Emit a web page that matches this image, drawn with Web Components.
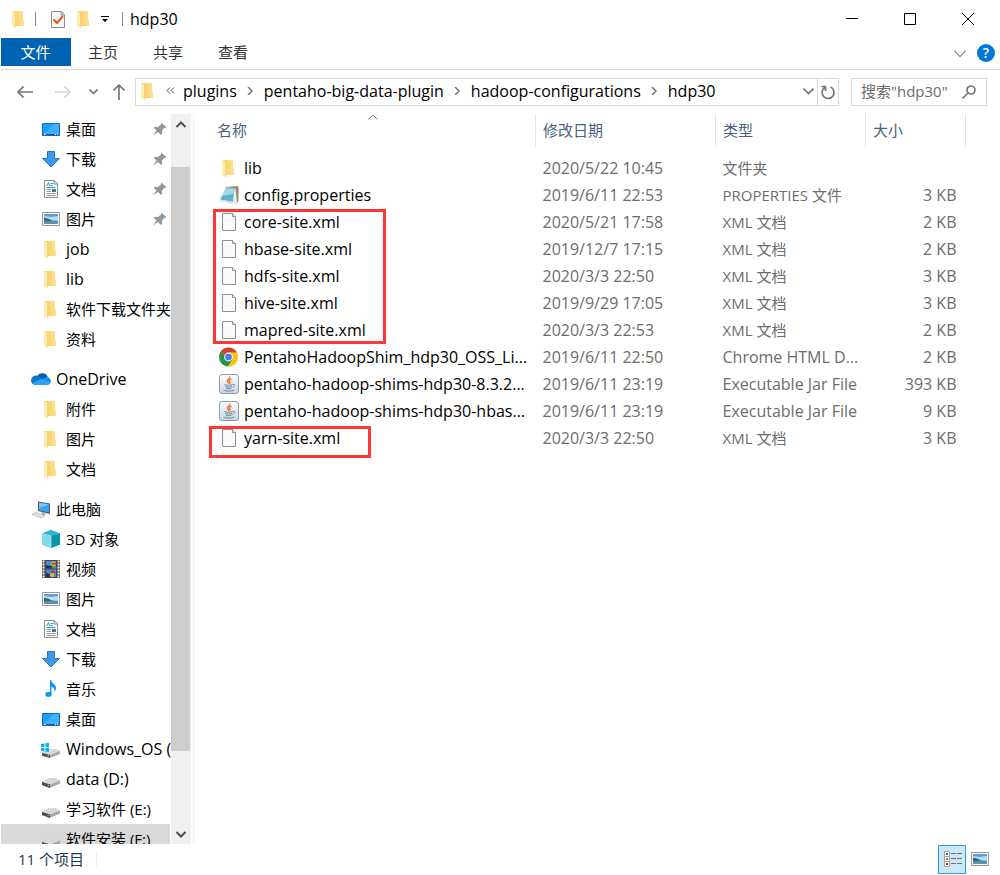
<!DOCTYPE html>
<html lang="zh-CN">
<head>
<meta charset="utf-8">
<title>hdp30</title>
<style>
  body {
    margin: 0;
    background: #fff;
    color: #000;
    font: 15px/20px "Open Sans", "Noto Sans CJK SC", sans-serif;
  }
</style>
</head>
<body>

<explorer-window>
  <title-bar slot="title">hdp30</title-bar>
  <ribbon-tabs slot="ribbon"></ribbon-tabs>
  <address-bar slot="address"></address-bar>

  <nav-pane slot="nav">
    <nav-item icon="desktop" pinned>桌面</nav-item>
    <nav-item icon="download" pinned>下载</nav-item>
    <nav-item icon="document" pinned>文档</nav-item>
    <nav-item icon="picture" pinned>图片</nav-item>
    <nav-item icon="folder" lang="en">job</nav-item>
    <nav-item icon="folder" lang="en">lib</nav-item>
    <nav-item icon="folder">软件下载文件夹</nav-item>
    <nav-item icon="folder">资料</nav-item>

    <nav-item icon="onedrive" root lang="en">OneDrive</nav-item>
    <nav-item icon="folder">附件</nav-item>
    <nav-item icon="folder">图片</nav-item>
    <nav-item icon="folder">文档</nav-item>

    <nav-item icon="computer" root>此电脑</nav-item>
    <nav-item icon="cube">3D 对象</nav-item>
    <nav-item icon="video">视频</nav-item>
    <nav-item icon="picture">图片</nav-item>
    <nav-item icon="document">文档</nav-item>
    <nav-item icon="download">下载</nav-item>
    <nav-item icon="music">音乐</nav-item>
    <nav-item icon="desktop">桌面</nav-item>
    <nav-item icon="osdrive" lang="en">Windows_OS (</nav-item>
    <nav-item icon="drive" lang="en">data (D:)</nav-item>
    <nav-item icon="drive">学习软件 (E:)</nav-item>
    <nav-item icon="drive" selected>软件安装 (F:)</nav-item>
  </nav-pane>

  <file-list slot="files"></file-list>
  <status-bar slot="status">11 个项目</status-bar>
</explorer-window>

<script>
// All icons are drawn on a 20x20 grid.
const ICONS = {
  folder: `
    <defs><linearGradient id="f" x2="1" y2="0"><stop stop-color="#f3cd67"/><stop offset="1" stop-color="#ffe28c"/></linearGradient></defs>
    <path d="M3 2h11v8l1 1v6H6z" fill="url(#f)"/>
    <path d="M3 2l3.6 2v15L3 17.4z" fill="#fdebb0"/>
    <path d="M6.6 4v15" stroke="#e9c56a" stroke-width=".5"/>`,
  checkdoc: `
    <path d="M3.5 2.5h10l3 3v13h-13z" fill="#f7f7f7" stroke="#8c8c8c"/>
    <path d="M13 2.5v3.500h3.500" fill="#ddd" stroke="#8c8c8c"/>
    <path d="M5.500 10.500l3.500 3.500 6-7" fill="none" stroke="#e8591c" stroke-width="2"/>`,
  desktop: `
    <path d="M1.500 4.500h17v12h-17z" fill="#1a9fff" stroke="#0c6db8"/>
    <path d="M2 15.500L13 5h5v10.500z" fill="#41b1ff"/>
    <path d="M2 15.500h16" stroke="#0a5c9e"/>
    <path d="M3 15.500h1.500M14 15.500h1M16 15.500h1" stroke="#fff"/>`,
  download: `<path d="M6.500 2.500h7v7h5L10 18 1.500 9.500h5z" fill="#3d98e8" stroke="#2878c4"/>`,
  document: `
    <path d="M3.500 1.500h10l3 3v14h-13z" fill="#fbfbfb" stroke="#8e8e8e"/>
    <path d="M13 1.500v3.500h3.500" fill="#e4e4e4" stroke="#8e8e8e"/>
    <path d="M5.500 7l2-3.500L8.500 7M9.500 4.500H12M9.500 6.500H12M5.500 8.500h9" fill="none" stroke="#2d9ad8"/>
    <path d="M5.500 10.500H10M5.500 12.500H10M5.500 14.500h9M5.500 16.500h9" stroke="#999"/>
    <path d="M11 10h4v3h-4z" fill="#3f7f9c"/>`,
  picture: `
    <path d="M1.500 3.500h17v13h-17z" fill="#fff" stroke="#979797"/>
    <path d="M3 5h14v10H3z" fill="#b9dcf6"/>
    <path d="M3 5h14v2l-7 1-7-1z" fill="#5a9fe2"/>
    <path d="M3 8.500l4 1 4 2 6 .500V13H3z" fill="#3f6b5c"/>
    <path d="M3 12.500l7-.500 7 .500V15H3z" fill="#5a93bd"/>`,
  onedrive: `
    <path d="M6 7.500A6 6 0 0 1 16.800 8L12 13 4 9z" fill="#0b5cb0"/>
    <path d="M5 16a4.700 4.700 0 1 1 2.600-8.400L15 12l-7 4z" fill="#1172d0"/>
    <path d="M10 11l5-3a4.200 4.200 0 0 1 4.400 6l-5 1z" fill="#1b8de4"/>
    <path d="M1.500 14L11 9.800l8.400 4.400A3.500 3.500 0 0 1 16 16H5a4.500 4.500 0 0 1-3.500-2z" fill="#29a5ee"/>`,
  computer: `
    <path d="M7 2.500l12 2V15L7 12z" fill="#4a5c6c"/>
    <path d="M8 3.800l10 1.700v8L8 11z" fill="#35a4ee"/>
    <path d="M8 3.800l10 1.700L8 9z" fill="#7cc7f8"/>
    <path d="M11 13l3 .800.500 2.200-4-.500z" fill="#99a4ad"/>
    <path d="M1 15.500l4-2 9 3.500-4 2z" fill="#cdd3d8" stroke="#969ea5" stroke-width=".5"/>
    <path d="M3 15.500l8 2.500M5 14.500l7.500 2.800" stroke="#f6f6f6" stroke-width=".6"/>`,
  cube: `
    <path d="M10 1l9 3.500v11L10 19l-9-3.500v-11z" fill="#36c2d7"/>
    <path d="M1 4.500L10 6v13l-9-3.500z" fill="#7adce8"/>
    <path d="M10 6l9-1.500v11L10 19z" fill="#0a95ad"/>
    <path d="M1 4.500L10 1l9 3.500L10 7z" fill="#2fb5ca"/>
    <path d="M1 4.500L10 7v12" fill="none" stroke="#c8f3f7" stroke-width=".6"/>`,
  video: `
    <path d="M1 1h18v18H1z" fill="#464646"/>
    <path d="M2.500 1.500v17M17.500 1.500v17" stroke="#f2f2f2" stroke-width="2" stroke-dasharray="2 1"/>
    <path d="M5 2h10v7.500H5zM5 10.500h10V18H5z" fill="#4b8ad8"/>
    <path d="M5 6l4 1 3-1v3.500H5zM5 14l3 1 2-1v4H5z" fill="#26354e"/>
    <circle cx="12.500" cy="5" r="2.500" fill="#d9b52e"/>
    <path d="M11 4h4v1.500h-4z" fill="#bd3426"/>
    <circle cx="12" cy="8" r="1.500" fill="#4f9d3e"/>
    <circle cx="11" cy="16" r="2.200" fill="#e3b936"/>
    <path d="M10 12h4v2h-4z" fill="#b9362d"/>`,
  music: `
    <path d="M10 1c.4 3 5 4.500 5 8 0 1.700-.5 2.700-1.500 4 .5-3-.8-4.500-3-5.300V15H9V1z" fill="#0f97f4"/>
    <ellipse cx="7.500" cy="15.300" rx="3.200" ry="2.600" fill="#0f97f4"/>`,
  drive: `
    <path d="M1 13l7-4h6l5 2.500v3L8.500 19 1 16z" fill="#a7a7a7"/>
    <path d="M1 13l7-4h6l5 2.500L9 15.500z" fill="#d9d9d9"/>
    <path d="M1 13l8 2.500V19l-8-3z" fill="#4b4b4b"/>
    <path d="M6.500 16.500h1.500" stroke="#58dd58" stroke-width="1.300"/>`,
  osdrive: `
    <path d="M1 14l7-4h6l5 2v3L8.500 19 1 17z" fill="#a7a7a7"/>
    <path d="M1 14l7-4h6l5 2-10 4z" fill="#d9d9d9"/>
    <path d="M1 14l8 2v3l-8-2.500z" fill="#4b4b4b"/>
    <path d="M6.500 17h1.500" stroke="#58dd58" stroke-width="1.300"/>
    <path d="M0 5l3.500-.500V8H0zM4.500 4.300L8 4v4H4.500zM0 9h3.500v3.500L0 12zM4.500 9H8v4l-3.500-.400z" fill="#00b4f0"/>`,
  config: `
    <path d="M7 2l12-1 .500 1v14l-2.500 3-1-1z" fill="#9b8d6c"/>
    <path d="M7 2l9.500 1.500 1.500 14L16 19l-3-2z" fill="#e8f1f3"/>
    <path d="M7 3l8.500 1L14 17 1 14.500z" fill="#62b4cd"/>
    <path d="M7 3l8.500 1-1 5-12 2z" fill="#a3d8e6"/>
    <path d="M1 14.500L14 17l1 1-3 .500L1 16z" fill="#d6e2e5"/>
    <path d="M6.500 2.500l10 1" stroke="#737d80" stroke-dasharray="1 1"/>`,
  file: `
    <path d="M3.500 1.500h10l3 3v14h-13z" fill="#fafafa" stroke="#8f8f8f"/>
    <path d="M13.500 1.500v3h3" fill="#ececec" stroke="#8f8f8f"/>`,
  chrome: `
    <circle cx="9.500" cy="10" r="9.500" fill="#fbc116"/>
    <path d="M9.500 10L1.300 5.300a9.500 9.500 0 0 1 16.400 0z" fill="#d93f30"/>
    <path d="M1.300 5.300A9.500 9.500 0 0 0 9 19.500l4.500-7-4-2.500z" fill="#27964a"/>
    <path d="M9.500 5.500h8.300a9.500 9.500 0 0 1-8.800 14l4.500-7z" fill="#fbc116"/>
    <circle cx="9.500" cy="10" r="4.400" fill="#fff"/>
    <circle cx="9.500" cy="10" r="3.400" fill="#4a80ec"/>`,
  jar: `
    <defs><linearGradient id="j" x2="0" y2="1"><stop stop-color="#fdfdfe"/><stop offset="1" stop-color="#ccd6e0"/></linearGradient></defs>
    <rect x=".5" y=".5" width="19" height="19" rx="2.500" fill="url(#j)" stroke="#8d9dad"/>
    <path d="M10.500 2.500c1.500 2-3.500 3-2 5l1.500 2M12.500 5c-3 1.300-2.500 2-1.500 3.500l-.5 1.200" fill="none" stroke="#e8762c" stroke-width="1.400"/>
    <path d="M5.500 10.500c2 1 6 1 8 0M6 12.500c2 .800 5 .800 7 0M7 14.300c1.500.600 4 .600 5.500 0M4.500 16c2.500 1.500 8 1.500 11 0M14 10.500c2.500-.500 2 2-.5 2.800" fill="none" stroke="#6685a5" stroke-width="1"/>`,
  pin: `<path d="M12 3.500l5.500 4.500-1.500 1-.5-.300-2.500 2.800.200 3L12 16l-3-3-5 3.500 3.500-5L4.800 9l1-1.200 3 .200L12 5.500z" fill="#8d9aa4"/>`,
  details: `
    <path d="M2.500 2.500h5v5h-5zM2.500 7.500h5v5h-5zM2.500 12.500h5v5h-5z" fill="#fff" stroke="#a3a3a3"/>
    <path d="M4 5h2" stroke="#2c6fb0" stroke-width="2"/>
    <path d="M4 10h2" stroke="#cf6a25" stroke-width="2"/>
    <path d="M4 15h2" stroke="#c81a1a" stroke-width="2"/>
    <path d="M9 4.500h5M15 4.500h5M9 9.500h5M15 9.500h5M9 14.500h5M15 14.500h5" stroke="#6f6f6f"/>`,
};

const icon = name =>
  `<svg class="icon" width="20" height="20" viewBox="0 0 20 20" aria-hidden="true">${ICONS[name]}</svg>`;

const BASE = `
  *, *::before { box-sizing: border-box; }
  svg { display: block; flex: none; }
  button {
    display: flex; align-items: center; justify-content: center;
    border: 0; padding: 0; background: none; color: inherit; font: inherit;
  }
  a { color: inherit; text-decoration: none; }
`;

/** Frame: lays out the bars, the navigation pane and the file list. */
class ExplorerWindow extends HTMLElement {
  connectedCallback() {
    this.attachShadow({ mode: 'open' }).innerHTML = `
      <style>
        ${BASE}
        :host { display: flex; flex-direction: column; height: 100vh; padding-left: 1px; box-sizing: border-box; overflow: hidden; }
        main { flex: 1; display: flex; min-height: 0; }
        ::slotted([slot="files"]) { flex: 1; min-width: 0; }
      </style>
      <slot name="title"></slot>
      <slot name="ribbon"></slot>
      <slot name="address"></slot>
      <main>
        <slot name="nav"></slot>
        <slot name="files"></slot>
      </main>
      <slot name="status"></slot>
    `;
  }
}

class TitleBar extends HTMLElement {
  connectedCallback() {
    this.attachShadow({ mode: 'open' }).innerHTML = `
      <style>
        ${BASE}
        :host { display: flex; align-items: center; height: 38px; padding-left: 8px; flex: none; font-size: 16px; }
        .sep { width: 1px; height: 14px; background: #8a8a8a; margin: 0 6px; }
        .quick { margin-left: 6px; }
        .more { width: 22px; }
        .more + .sep { margin: 0 7px 0 6px; }
        .controls { display: flex; margin-left: auto; padding-right: 3px; }
        .controls button { width: 58px; height: 38px; }
        .controls svg { fill: none; stroke: #000; }
      </style>
      ${icon('folder')}
      <span class="sep"></span>
      <button class="quick" aria-label="属性">${icon('checkdoc')}</button>
      <button class="quick" aria-label="新建文件夹">${icon('folder')}</button>
      <button class="more" aria-label="自定义快速访问工具栏">
        <svg width="8" height="8" viewBox="0 0 8 8"><path d="M0 1h8v1H0zM1 4h6L4 7z"/></svg>
      </button>
      <span class="sep"></span>
      <slot></slot>
      <div class="controls">
        <button aria-label="最小化"><svg width="12" height="12"><path d="M0 5.500h12"/></svg></button>
        <button aria-label="最大化"><svg width="12" height="12"><path d="M.5.500h11v11H.5z"/></svg></button>
        <button aria-label="关闭"><svg width="12" height="12"><path d="M0 0l12 12M12 0L0 12"/></svg></button>
      </div>
    `;
  }
}

class RibbonTabs extends HTMLElement {
  connectedCallback() {
    this.attachShadow({ mode: 'open' }).innerHTML = `
      <style>
        ${BASE}
        :host { display: flex; height: 32px; flex: none; color: #333; border-bottom: 1px solid #dadbdc; box-sizing: border-box; }
        .tab { width: 65px; height: 28px; padding-right: 1px; }
        .file { width: 70px; background: #0063b1; color: #fff; }
        .expand { margin-left: auto; width: 26px; height: 30px; }
        .help { width: 26px; height: 30px; margin-right: 1px; }
        .help span { width: 18px; height: 18px; border-radius: 50%; background: #0078d7; color: #fff; font-size: 14px; line-height: 18px; font-weight: 600; }
      </style>
      <button class="tab file">文件</button>
      <button class="tab">主页</button>
      <button class="tab">共享</button>
      <button class="tab">查看</button>
      <button class="expand" aria-label="展开功能区">
        <svg width="12" height="7"><path d="M0 .500l6 6 6-6" fill="none" stroke="#8a8a8a" stroke-width="1.200"/></svg>
      </button>
      <button class="help" aria-label="帮助"><span>?</span></button>
    `;
  }
}

class AddressBar extends HTMLElement {
  connectedCallback() {
    const crumbs = ['plugins', 'pentaho-big-data-plugin', 'hadoop-configurations', 'hdp30'];
    const arrow = `<svg width="27" height="8"><path d="M11 0l4 4-4 4" fill="none" stroke="#777" stroke-width="1.500"/></svg>`;

    this.attachShadow({ mode: 'open' }).innerHTML = `
      <style>
        ${BASE}
        :host { display: flex; align-items: center; height: 43px; flex: none; padding-right: 13px; }
        svg { fill: none; stroke: #777; stroke-width: 1.7; }
        .icon { fill: #000; stroke: none; stroke-width: 1; }
        .move { display: flex; width: 134px; flex: none; }
        .move button { height: 28px; }
        .back { width: 48px; }
        .forward { width: 28px; }
        .forward svg { stroke: #d5d5d5; }
        .recent { width: 33px; }
        .up { width: 17px; }
        .box { display: flex; align-items: center; height: 28px; border: 1px solid #d9d9d9; }
        .path { flex: 1; padding-left: 2px; min-width: 0; font-size: 16px; }
        .path > .icon, .crumbs, .root { margin-bottom: 2px; }
        .crumbs { display: flex; align-items: center; white-space: nowrap; }
        .root { width: 25px; justify-content: center; }
        .drop { margin-left: auto; width: 18px; }
        .refresh { width: 21px; height: 26px; border-left: 1px solid #d9d9d9; }
        .search { width: 136px; margin-left: 12px; padding-left: 9px; }
        input { flex: 1; min-width: 0; width: 0; border: 0; padding: 0 0 2px; outline: 0; background: none; font: inherit; color: #000; }
        input::placeholder { color: #6d6d6d; opacity: 1; }
        .search button { width: 34px; }
      </style>
      <nav class="move">
        <button class="back" aria-label="后退"><svg width="16" height="12"><path d="M16 6H1M6.500.500L1 6l5.500 5.500"/></svg></button>
        <button class="forward" aria-label="前进"><svg width="16" height="12"><path d="M0 6h15M9.500.500L15 6l-5.500 5.500"/></svg></button>
        <button class="recent" aria-label="最近位置"><svg width="9" height="6"><path d="M.500.500l4 4 4-4"/></svg></button>
        <button class="up" aria-label="上移"><svg width="12" height="16"><path d="M6 16V1M.500 6.500L6 1l5.500 5.500"/></svg></button>
      </nav>
      <div class="box path">
        ${icon('folder')}
        <button class="root" aria-label="上级位置"><svg width="9" height="7"><path d="M4 .500l-3 3 3 3M8 .500l-3 3 3 3" stroke="#555" stroke-width="1"/></svg></button>
        <div class="crumbs">${crumbs.map(c => `<a href="#${c}">${c}</a>`).join(arrow)}</div>
        <button class="drop" aria-label="历史记录"><svg width="11" height="7"><path d="M.500.500l5 5 5-5"/></svg></button>
        <button class="refresh" aria-label="刷新">
          <svg width="16" height="16"><path d="M10.500 3a6 6 0 1 1-5.800.500M1.500 2.500h4v4.500"/></svg>
        </button>
      </div>
      <div class="box search">
        <input type="text" aria-label="搜索" placeholder='搜索"hdp30"'>
        <button aria-label="开始搜索"><svg width="14" height="14"><circle cx="9" cy="5" r="4"/><path d="M6 8l-5.500 5.500"/></svg></button>
      </div>
    `;
  }
}

/** One entry of the tree. Attributes: icon, root, pinned, selected. */
class NavItem extends HTMLElement {
  connectedCallback() {
    this.attachShadow({ mode: 'open' }).innerHTML = `
      <style>
        ${BASE}
        :host { display: block; flex: none; }
        :host([lang="en"]) { font-size: 16px; }
        :host([root]) { margin-top: 10px; }
        :host([selected]) { background: #d9d9d9; }
        a { display: flex; align-items: center; gap: 5px; height: 30px; padding-left: 40px; white-space: nowrap; }
        :host([root]) a { padding-left: 30px; }
        .pin { margin-left: auto; width: 21px; }
      </style>
      <a href="#">${icon(this.getAttribute('icon'))}<slot></slot>${
        this.hasAttribute('pinned') ? `<span class="pin">${icon('pin')}</span>` : ''}</a>
    `;
  }
}

class NavPane extends HTMLElement {
  connectedCallback() {
    this.attachShadow({ mode: 'open' }).innerHTML = `
      <style>
        ${BASE}
        :host { display: flex; flex: none; width: 193px; padding: 1px 2px 0 0; border-right: 1px solid #f0f0f0; box-sizing: border-box; }
        .tree { width: 170px; padding-right: 1px; display: flex; flex-direction: column; overflow: hidden; }
        .bar { flex: 1; display: flex; flex-direction: column; background: #f0f0f0; }
        .bar button { height: 20px; padding-right: 1px; flex: none; }
        .bar svg { fill: none; stroke: #505050; stroke-width: 2; }
        .track { flex: 1; display: grid; grid-template-rows: 33fr 584fr 73fr; }
        .thumb { grid-row: 2; margin-right: 1px; background: #cdcdcd; }
      </style>
      <nav class="tree"><slot></slot></nav>
      <div class="bar">
        <button aria-label="向上滚动"><svg width="10" height="7"><path d="M.500 6L5 1.500 9.500 6"/></svg></button>
        <div class="track"><div class="thumb"></div></div>
        <button aria-label="向下滚动"><svg width="10" height="7"><path d="M.500 1L5 5.500 9.500 1"/></svg></button>
      </div>
    `;
  }
}

const FILES = [
  ['folder', 'lib', '2020/5/22 10:45', '文件夹', ''],
  ['config', 'config.properties', '2019/6/11 22:53', 'PROPERTIES 文件', '3 KB'],
  ['file', 'core-site.xml', '2020/5/21 17:58', 'XML 文档', '2 KB'],
  ['file', 'hbase-site.xml', '2019/12/7 17:15', 'XML 文档', '2 KB'],
  ['file', 'hdfs-site.xml', '2020/3/3 22:50', 'XML 文档', '3 KB'],
  ['file', 'hive-site.xml', '2019/9/29 17:05', 'XML 文档', '3 KB'],
  ['file', 'mapred-site.xml', '2020/3/3 22:53', 'XML 文档', '2 KB'],
  ['chrome', 'PentahoHadoopShim_hdp30_OSS_Li...', '2019/6/11 22:50', 'Chrome HTML D...', '2 KB'],
  ['jar', 'pentaho-hadoop-shims-hdp30-8.3.2...', '2019/6/11 23:19', 'Executable Jar File', '393 KB'],
  ['jar', 'pentaho-hadoop-shims-hdp30-hbas...', '2019/6/11 23:19', 'Executable Jar File', '9 KB'],
  ['file', 'yarn-site.xml', '2020/3/3 22:50', 'XML 文档', '3 KB'],
];

/** Details view, with red frames laid over some of the rows. */
class FileList extends HTMLElement {
  connectedCallback() {
    const type = t => `<td class="${/[\u4e00-\u9fff]/.test(t) ? 'cjk' : ''}">${t}</td>`;
    const rows = FILES.map(([ic, name, date, kind, size]) => `
      <tr>
        <td class="name"><a href="#">${icon(ic)}${name}</a></td>
        <td>${date}</td>${type(kind)}<td class="size">${size}</td>
      </tr>`).join('');

    this.attachShadow({ mode: 'open' }).innerHTML = `
      <style>
        ${BASE}
        :host { display: block; position: relative; padding: 1px 34px 0 14px; overflow: hidden; }
        table { width: 100%; table-layout: fixed; border-collapse: collapse; font-size: 16px; color: #6d6d6d; }
        .c-date { width: 180px; }
        .c-type { width: 150px; }
        .c-size { width: 100px; }
        th { position: relative; height: 33px; padding: 0; font-weight: 400; font-size: 15px; color: #4c607a; border-right: 1px solid #e5e5e5; }
        th button { padding: 0 0 2px 7px; height: 33px; }
        th:first-child button { padding-left: 9px; }
        .sort { position: absolute; top: 0; left: 49%; }
        .space td { height: 7px; padding: 0; }
        td { height: 27px; padding: 0 0 0 7px; white-space: nowrap; overflow: hidden; }
        .cjk { font-size: 15px; }
        .name { padding-left: 11px; color: #000; }
        .name a { display: flex; align-items: center; gap: 5px; }
        .size { text-align: right; padding-right: 9px; }
        .frame { position: absolute; border: 3px solid #ff3636; pointer-events: none; }
        .configs { left: 19px; top: 96px; width: 173px; height: 135px; }
        .yarn { left: 15px; top: 313px; width: 162px; height: 32px; }
      </style>
      <table>
        <colgroup><col><col class="c-date"><col class="c-type"><col class="c-size"></colgroup>
        <thead>
          <tr>
            <th><button>名称</button><svg class="sort" width="10" height="6"><path d="M.500 5.500L5 1l4.500 4.500" fill="none" stroke="#777"/></svg></th>
            <th><button>修改日期</button></th>
            <th><button>类型</button></th>
            <th><button>大小</button></th>
          </tr>
        </thead>
        <tbody><tr class="space"><td colspan="4"></td></tr>${rows}</tbody>
      </table>
      <div class="frame configs"></div>
      <div class="frame yarn"></div>
    `;
  }
}

class StatusBar extends HTMLElement {
  connectedCallback() {
    this.attachShadow({ mode: 'open' }).innerHTML = `
      <style>
        ${BASE}
        :host { display: flex; align-items: center; height: 31px; flex: none; padding: 0 6px 1px 17px; box-sizing: border-box; color: #1e395b; }
        .sep { width: 1px; height: 14px; margin-left: 12px; background: #eee; }
        button { width: 28px; height: 29px; }
        .details { margin-left: auto; border: 1px solid #26a0da; background: #cce8f6; }
      </style>
      <slot></slot>
      <span class="sep"></span>
      <button class="details" aria-label="详细信息">${icon('details')}</button>
      <button aria-label="大缩略图">${icon('picture')}</button>
    `;
  }
}

customElements.define('explorer-window', ExplorerWindow);
customElements.define('title-bar', TitleBar);
customElements.define('ribbon-tabs', RibbonTabs);
customElements.define('address-bar', AddressBar);
customElements.define('nav-item', NavItem);
customElements.define('nav-pane', NavPane);
customElements.define('file-list', FileList);
customElements.define('status-bar', StatusBar);
</script>
</body>
</html>
